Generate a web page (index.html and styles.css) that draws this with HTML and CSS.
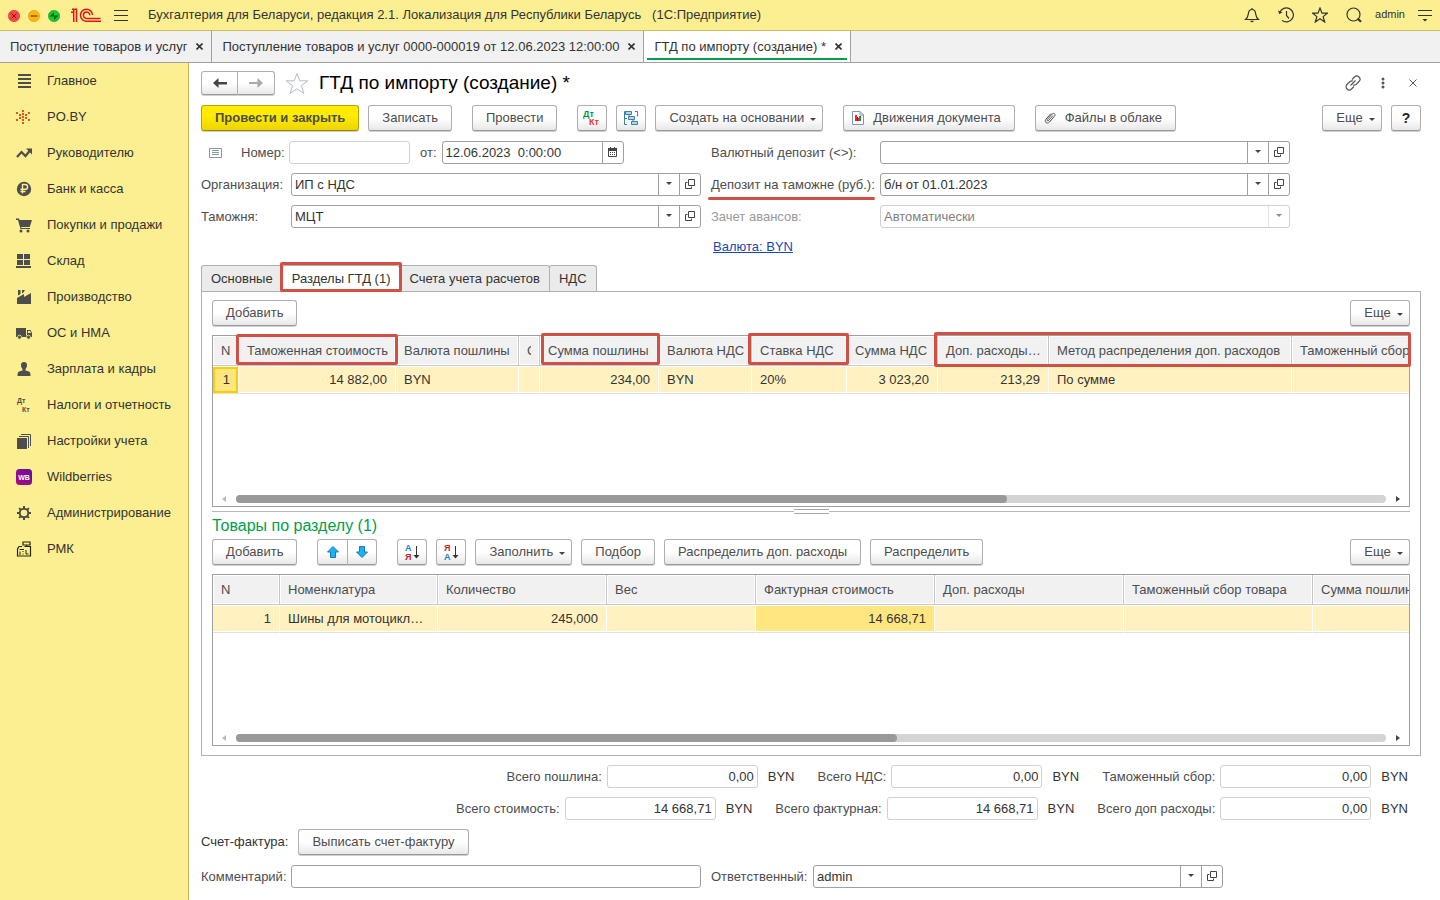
FILE: index.html
```html
<!DOCTYPE html>
<html lang="ru">
<head>
<meta charset="utf-8">
<title>ГТД по импорту (создание) *</title>
<link rel="stylesheet" href="styles.css">
</head>
<body>
<svg class="defs" aria-hidden="true">
  <symbol id="open" viewBox="0 0 10 10"><path d="M3.5.5h6v6h-6zM2.500 3.500h-2v6h6v-2" fill="none" stroke="#444"/></symbol>
  <symbol id="drop" viewBox="0 0 6 3"><path d="M0 0h6L3 3z" fill="#444"/></symbol>
</svg>

<header class="topbar">
  <div class="lights">
    <svg width="12" height="12" viewBox="0 0 12 12"><circle cx="6" cy="6" r="5.700" fill="#fb4646" stroke="#dd3030" stroke-width=".6"/><path d="M3.500 3.500l5 5M8.500 3.500l-5 5" stroke="#7c0d0d"/></svg>
    <svg width="12" height="12" viewBox="0 0 12 12"><circle cx="6" cy="6" r="5.700" fill="#fdb70d" stroke="#dd9a10" stroke-width=".6"/><path d="M2.500 6h7" stroke="#b06a00" stroke-width="2"/></svg>
    <svg width="12" height="12" viewBox="0 0 12 12"><circle cx="6" cy="6" r="5.700" fill="#16c832" stroke="#10a428" stroke-width=".6"/><path d="M1.500 6.500L6 2v4.500zM10.500 5.500L6 10V5.500z" fill="#056312"/></svg>
  </div>
  <svg class="logo" width="30" height="15" viewBox="0 0 30 15" fill="none" stroke="#e2131d" stroke-width="1.500"><path d="M0 4.200h2.700V14M1 1.200h4.500V14M2.700 4V1.500"/><path d="M21.500 7A6 6 0 1 0 15.500 13.200H30M18.800 7.200A3.200 3.200 0 1 0 15.600 10.400H29.500"/></svg>
  <button class="icon-btn burger" aria-label="Меню"><svg width="14" height="12" viewBox="0 0 14 12"><path d="M0 .5h14M0 5.500h14M0 10.500h14" stroke="#333"/></svg></button>
  <div class="app-title">Бухгалтерия для Беларуси, редакция 2.1. Локализация для Республики Беларусь &nbsp; (1С:Предприятие)</div>
  <div class="top-icons">
    <button class="icon-btn" aria-label="Уведомления"><svg width="16" height="16" viewBox="0 0 16 16" fill="none" stroke="#333" stroke-width="1.200"><path d="M8 1v1.500M1.500 12.500h13C12 10.500 12 9 11.500 6 11.200 3.500 10 2.500 8 2.500S4.800 3.500 4.500 6C4 9 4 10.500 1.500 12.500z"/><path d="M5.500 13.700h5L8 15.500z" fill="#333" stroke="none"/></svg></button>
    <button class="icon-btn" aria-label="История"><svg width="16" height="16" viewBox="0 0 16 16" fill="none" stroke="#333" stroke-width="1.200"><path d="M1.800 5.500A7 7 0 1 1 4 13.400"/><path d="M8.500 4v4.500l2.500 3"/><path d="M0 3.500l1.200 3.500 3.300-1.500z" fill="#333" stroke="none"/></svg></button>
    <button class="icon-btn" aria-label="Избранное"><svg width="16" height="16" viewBox="0 0 16 16" fill="none" stroke="#333" stroke-width="1.200"><path d="M8 1l2 5.200h5.300l-4.200 3.400 1.600 5.400L8 11.800 3.300 15l1.600-5.400L.7 6.200H6z"/></svg></button>
    <button class="icon-btn" aria-label="Поиск"><svg width="16" height="16" viewBox="0 0 16 16" fill="none" stroke="#333" stroke-width="1.200"><circle cx="7.500" cy="7.500" r="6.500"/><path d="M11.500 11.500l3.500 3.300" stroke-width="2.200"/></svg></button>
  </div>
  <span class="user">admin</span>
  <button class="icon-btn" aria-label="Настройки"><svg width="14" height="14" viewBox="0 0 14 14"><path d="M0 2.500h14M0 7.500h14" stroke="#333"/><path d="M4.500 11h5L7 13.500z" fill="#333"/></svg></button>
</header>

<nav class="windows" aria-label="Открытые окна">
  <div class="window-tab"><span>Поступление товаров и услуг</span><button class="icon-btn" aria-label="Закрыть"><svg width="7" height="7" viewBox="0 0 7 7"><path d="M.5.500l6 6M6.500.500l-6 6" stroke="#333" stroke-width="1.600"/></svg></button></div>
  <div class="window-tab"><span>Поступление товаров и услуг 0000-000019 от 12.06.2023 12:00:00</span><button class="icon-btn" aria-label="Закрыть"><svg width="7" height="7" viewBox="0 0 7 7"><path d="M.5.500l6 6M6.500.500l-6 6" stroke="#333" stroke-width="1.600"/></svg></button></div>
  <div class="window-tab current"><span>ГТД по импорту (создание) *</span><button class="icon-btn" aria-label="Закрыть"><svg width="7" height="7" viewBox="0 0 7 7"><path d="M.5.500l6 6M6.500.500l-6 6" stroke="#333" stroke-width="1.600"/></svg></button></div>
</nav>

<div class="workspace">
  <nav class="sidebar" aria-label="Разделы">
    <a href="#"><svg viewBox="0 0 16 16"><path d="M2 2h13M2 6h13M2 10h13M2 14h13" stroke="#4d4d4d" stroke-width="2"/></svg>Главное</a>
    <a href="#"><svg viewBox="0 0 16 16" fill="#e8501c"><path d="M6 1h2v2H6zM6 4h2v2H6zM6 7h2v2H6zM6 10h2v2H6zM6 13h2v2H6zM3 5h2v2H3zM3 8h2v2H3zM9 5h2v2H9zM9 8h2v2H9zM0 3h2v2H0zM0 10h2v2H0zM12 3h2v2h-2zM12 10h2v2h-2z"/></svg>PO.BY</a>
    <a href="#"><svg viewBox="0 0 16 16"><path d="M1 12l4.500-5 4 4 4.500-5.500" fill="none" stroke="#4d4d4d" stroke-width="2.200"/><path d="M10 3.500h6v6z" fill="#4d4d4d"/></svg>Руководителю</a>
    <a href="#"><svg viewBox="0 0 16 16"><circle cx="8" cy="8" r="7.200" fill="#4d4d4d"/><path d="M6.500 12.500v-9h2.700a2.300 2.300 0 0 1 0 4.800H4.500M4.500 10.500h5" fill="none" stroke="#fcef91" stroke-width="1.400"/></svg>Банк и касса</a>
    <a href="#"><svg viewBox="0 0 16 16"><path d="M0 1.500h3l.6 1.500H16l-2.300 7H5l.5 1H14v1H4.500L2 3H0z" fill="#4d4d4d"/><circle cx="5" cy="14" r="1.500" fill="#4d4d4d"/><circle cx="12" cy="14" r="1.500" fill="#4d4d4d"/></svg>Покупки и продажи</a>
    <a href="#"><svg viewBox="0 0 16 16"><path d="M1 1h6v5H1zM8 1h6v5H8zM1 7h6v5H1zM8 7h6v5H8zM0 13h15v2H0z" fill="#4d4d4d"/></svg>Склад</a>
    <a href="#"><svg viewBox="0 0 16 16"><path d="M1 15V9l7-4v3l7-4v11zM2 1h2.500v4L2 6.500zM6 1h3L7 4H6z" fill="#4d4d4d"/></svg>Производство</a>
    <a href="#"><svg viewBox="0 0 16 16"><path d="M0 3h10v9H0zM11 5h3.500L16 8v4h-5z" fill="#4d4d4d"/><path d="M12 6h2l1 2h-3z" fill="#fcef91"/><path d="M9 10.500h3v1.500H9z" fill="#4d4d4d"/><g fill="#4d4d4d" stroke="#fcef91" stroke-width=".8"><circle cx="3.500" cy="12.200" r="2"/><circle cx="12.500" cy="12.200" r="2"/></g></svg>ОС и НМА</a>
    <a href="#"><svg viewBox="0 0 16 16"><path d="M8 1c2.200 0 3.200 1.500 3 3.500-.2 1.800-1 3-1.500 3.500v1.500l3.500 1c1 .4 1.500 1.500 1.500 4.500h-13c0-3 .5-4.100 1.500-4.500l3.500-1V8C6 7.500 5.200 6.300 5 4.500 4.800 2.500 5.800 1 8 1z" fill="#4d4d4d"/></svg>Зарплата и кадры</a>
    <a href="#"><svg viewBox="0 0 16 16"><text class="mini-text" x="1" y="6">Дт</text><text class="mini-text" x="6" y="15">Кт</text></svg>Налоги и отчетность</a>
    <a href="#"><svg viewBox="0 0 16 16"><path d="M1 5h10v11H1z" fill="#4d4d4d"/><path d="M3 3.500h9.500V15M5 1.500h9.500V13" fill="none" stroke="#4d4d4d"/></svg>Настройки учета</a>
    <a href="#"><svg viewBox="0 0 16 16"><defs><linearGradient id="wb" x1="0" y1="1" x2="1" y2="0"><stop offset="0" stop-color="#b00a86"/><stop offset="1" stop-color="#5f0fa0"/></linearGradient></defs><rect width="16" height="16" rx="3.500" fill="url(#wb)"/><text class="wb-text" x="8" y="11">WB</text></svg>Wildberries</a>
    <a href="#"><svg viewBox="0 0 16 16" fill="none" stroke="#4d4d4d"><circle cx="8" cy="8" r="4.300" stroke-width="2"/><path d="M8 1v2.500M8 12.500V15M1 8h2.500M12.500 8H15M3.100 3.100l1.700 1.700M11.200 11.200l1.700 1.700M12.900 3.100l-1.700 1.700M4.800 11.200l-1.700 1.700" stroke-width="2"/></svg>Администрирование</a>
    <a href="#"><svg viewBox="0 0 16 16" fill="none" stroke="#26260f" stroke-width="1.200"><path d="M7 1h7v3H7zM10.500 4v2M6 5.500H3L1.500 8v7h13V5.500h-6"/><path d="M3.500 8.500H8M4 10.500V14M6.500 10.500h1M6.500 13h1M10 9v4h2.500" stroke-width="1"/></svg>РМК</a>
  </nav>

  <main class="document">
    <div class="title-row">
      <div class="split-btn">
        <button class="btn" aria-label="Назад"><svg width="14" height="10" viewBox="0 0 14 10"><path d="M5.500 0v4H14v2.500H5.500V10L0 5z" fill="#444"/></svg></button><button class="btn" aria-label="Вперед"><svg width="14" height="10" viewBox="0 0 14 10"><path d="M8.500 0v4H0v2h8.500v4L14 5z" fill="#aaa"/></svg></button>
      </div>
      <button class="icon-btn" aria-label="В избранное"><svg width="24" height="23" viewBox="0 0 24 23"><path d="M12 1.500l2.800 7.300h8l-6.400 4.900 2.500 7.800-6.900-4.700-6.900 4.700 2.500-7.800L1.200 8.800h8z" fill="#fff" stroke="#b4bcc6"/></svg></button>
      <h1>ГТД по импорту (создание) *</h1>
      <div class="title-tools">
        <button class="icon-btn" aria-label="Ссылка"><svg width="16" height="16" viewBox="0 0 16 16" fill="none" stroke="#555" stroke-width="1.200"><path d="M7 4.500L9.500 2a3 3 0 0 1 4.500 4.500L11 9.500q-1.500 1-3 .5M9 11.500L6.500 14A3 3 0 0 1 2 9.500L5 6.500q1.500-1 3-.5M10.500 5.500l-5 5"/></svg></button>
        <button class="icon-btn" aria-label="Еще"><svg width="4" height="12" viewBox="0 0 4 12" fill="#555"><circle cx="2" cy="2" r="1.500"/><circle cx="2" cy="6" r="1.500"/><circle cx="2" cy="10" r="1.500"/></svg></button>
        <button class="icon-btn" aria-label="Закрыть"><svg width="8" height="8" viewBox="0 0 8 8"><path d="M.5.500l7 7M7.500.500l-7 7" stroke="#555"/></svg></button>
      </div>
    </div>

    <div class="toolbar main-tools">
      <div class="group"><button class="btn primary">Провести и закрыть</button><button class="btn">Записать</button></div>
      <div class="group"><button class="btn">Провести</button></div>
      <div class="group">
        <button class="btn square" aria-label="Дт Кт"><svg width="18" height="18" viewBox="0 0 18 18"><text class="mini-text debit" x="0" y="8">Дт</text><text class="mini-text credit" x="6" y="16">Кт</text></svg></button>
        <button class="btn square" aria-label="Структура"><svg width="16" height="16" viewBox="0 0 16 16" fill="none" stroke="#3f7fac"><path d="M4 1.500H1.500v13H4M12 1.500h2.500v5M1.500 8.500H4"/><path d="M2.500 1.500h6v3h-6zM5.500 6.500h6v3h-6zM8.500 11.500h6v3h-6zM6 4.500v2M10 9.500v2" fill="#b5d6ea"/></svg></button>
        <button class="btn menu">Создать на основании<svg class="caret"><use href="#drop"/></svg></button>
      </div>
      <div class="group"><button class="btn with-icon"><svg width="14" height="16" viewBox="0 0 14 16"><path d="M1.500 1.500h7.500l3.500 3.500v9.500h-11z" fill="#fff" stroke="#7f96ab"/><path d="M9 1.500V5h3.500" fill="none" stroke="#7f96ab"/><path d="M4 5h2v6H4z" fill="#e22"/><path d="M6 7h1v4H6z" fill="#444"/><path d="M7 8h1v3H7z" fill="#e22"/><path d="M8 6h2v5H8z" fill="#1a9a3c"/></svg>Движения документа</button></div>
      <div class="group"><button class="btn with-icon"><svg width="14" height="16" viewBox="0 0 14 16"><path d="M10 5.500L5.500 10.500c-.8.900-2 0-1.200-1L9.200 4c1.600-1.600 3.800.3 2.400 2.100L6.500 12c-2.400 2.500-5.600 0-3.600-2.700L8 3.500" fill="none" stroke="#555"/></svg>Файлы в облаке</button></div>
      <div class="group end"><button class="btn menu">Еще<svg class="caret"><use href="#drop"/></svg></button><button class="btn square help">?</button></div>
    </div>

    <form class="fields">
      <div class="row">
        <svg class="doc-state" width="13" height="10" viewBox="0 0 13 10" fill="none" stroke="#8796a8"><path d="M.5.500h12v9H.5zM3 2.500h7M3 4.500h7M3 6.500h7"/></svg>
        <label class="num-label" for="num">Номер:</label>
        <span class="box muted num"><input id="num" type="text"></span>
        <label class="date-label" for="date">от:</label>
        <span class="box date"><input id="date" type="text" value="12.06.2023  0:00:00"><button type="button" aria-label="Календарь"><svg width="9" height="10" viewBox="0 0 9 10"><path d="M.5 2v7.500h8V2z" fill="#fff" stroke="#444"/><path d="M0 1h9v3H0zM2 0h1v2H2zM6 0h1v2H6z" fill="#444"/><path d="M2 5.500h5M2 7.500h5" stroke="#444" stroke-dasharray="1"/></svg></button></span>
      </div>
      <div class="row right">
        <label for="curdep">Валютный депозит (&lt;&gt;):</label>
        <span class="box"><input id="curdep" type="text"><button type="button" aria-label="Выбрать"><svg class="caret"><use href="#drop"/></svg></button><button type="button" aria-label="Открыть"><svg class="open"><use href="#open"/></svg></button></span>
      </div>
      <div class="row left">
        <label for="org">Организация:</label>
        <span class="box"><input id="org" type="text" value="ИП с НДС"><button type="button" aria-label="Выбрать"><svg class="caret"><use href="#drop"/></svg></button><button type="button" aria-label="Открыть"><svg class="open"><use href="#open"/></svg></button></span>
      </div>
      <div class="row right">
        <label class="marked" for="dep">Депозит на таможне (руб.):</label>
        <span class="box"><input id="dep" type="text" value="б/н от 01.01.2023"><button type="button" aria-label="Выбрать"><svg class="caret"><use href="#drop"/></svg></button><button type="button" aria-label="Открыть"><svg class="open"><use href="#open"/></svg></button></span>
      </div>
      <div class="row left">
        <label for="customs">Таможня:</label>
        <span class="box"><input id="customs" type="text" value="МЦТ"><button type="button" aria-label="Выбрать"><svg class="caret"><use href="#drop"/></svg></button><button type="button" aria-label="Открыть"><svg class="open"><use href="#open"/></svg></button></span>
      </div>
      <div class="row right disabled">
        <label for="adv">Зачет авансов:</label>
        <span class="box muted"><input id="adv" type="text" value="Автоматически" disabled><button type="button" aria-label="Выбрать" disabled><svg class="caret"><use href="#drop"/></svg></button></span>
      </div>
      <div class="row currency"><a href="#">Валюта: BYN</a></div>
    </form>

    <div class="tabs" role="tablist">
      <button role="tab">Основные</button><button role="tab" class="active" aria-selected="true">Разделы ГТД (1)<span class="mark"></span></button><button role="tab">Счета учета расчетов</button><button role="tab">НДС</button>
    </div>

    <section class="panel">
      <div class="toolbar"><button class="btn">Добавить</button><div class="group end"><button class="btn menu">Еще<svg class="caret"><use href="#drop"/></svg></button></div></div>
      <div class="grid">
        <div class="viewport">
          <table>
            <colgroup><col class="w26"><col class="w157"><col class="w123"><col class="w21"><col class="w119"><col class="w93"><col class="w95"><col class="w91"><col class="w111"><col class="w243"><col></colgroup>
            <thead><tr><th>N</th><th>Таможенная стоимость</th><th>Валюта пошлины</th><th><span class="clip">С</span></th><th>Сумма пошлины</th><th>Валюта НДС</th><th>Ставка НДС</th><th>Сумма НДС</th><th>Доп. расходы…</th><th>Метод распределения доп. расходов</th><th>Таможенный сбор</th></tr></thead>
            <tbody><tr><td class="number focus">1</td><td class="number">14 882,00</td><td>BYN</td><td></td><td class="number">234,00</td><td>BYN</td><td>20%</td><td class="number">3 023,20</td><td class="number">213,29</td><td>По сумме</td><td></td></tr></tbody>
          </table>
        </div>
        <div class="scroll"><svg width="4" height="6" viewBox="0 0 4 6"><path d="M4 0v6L0 3z" fill="#bbb"/></svg><div class="track"><div class="thumb sections"></div></div><svg width="4" height="6" viewBox="0 0 4 6"><path d="M0 0v6l4-3z" fill="#444"/></svg></div>
        <span class="mark m-cost"></span><span class="mark m-duty"></span><span class="mark m-rate"></span><span class="mark m-extra"></span>
      </div>
      <div class="splitter"><span></span></div>
      <h2>Товары по разделу (1)</h2>
      <div class="toolbar">
        <div class="group"><button class="btn">Добавить</button></div>
        <div class="split-btn">
          <button class="btn" aria-label="Вверх"><svg width="12" height="12" viewBox="0 0 12 12"><path d="M6 .5L11.500 6H8.500v5.500h-5V6H.5z" fill="#1eb0f5" stroke="#157cb4"/></svg></button><button class="btn" aria-label="Вниз"><svg width="12" height="12" viewBox="0 0 12 12"><path d="M6 11.500L.5 6h3V.5h5V6h3z" fill="#1eb0f5" stroke="#157cb4"/></svg></button>
        </div>
        <div class="group">
          <button class="btn square" aria-label="По возрастанию"><svg width="16" height="18" viewBox="0 0 16 18"><text class="sort-text blue" x="1" y="8">А</text><text class="sort-text red" x="1" y="17">Я</text><path d="M12.500 3v10" stroke="#333"/><path d="M9.500 12h6l-3 3.500z" fill="#333"/></svg></button>
          <button class="btn square" aria-label="По убыванию"><svg width="16" height="18" viewBox="0 0 16 18"><text class="sort-text red" x="1" y="8">Я</text><text class="sort-text blue" x="1" y="17">А</text><path d="M12.500 3v10" stroke="#333"/><path d="M9.500 12h6l-3 3.500z" fill="#333"/></svg></button>
          <button class="btn menu">Заполнить<svg class="caret"><use href="#drop"/></svg></button>
          <button class="btn">Подбор</button>
          <button class="btn">Распределить доп. расходы</button>
          <button class="btn">Распределить</button>
        </div>
        <div class="group end"><button class="btn menu">Еще<svg class="caret"><use href="#drop"/></svg></button></div>
      </div>
      <div class="grid">
        <div class="viewport">
          <table>
            <colgroup><col class="w67"><col class="w158"><col class="w169"><col class="w149"><col class="w179"><col class="w189"><col class="w189"><col></colgroup>
            <thead><tr><th>N</th><th>Номенклатура</th><th>Количество</th><th>Вес</th><th>Фактурная стоимость</th><th>Доп. расходы</th><th>Таможенный сбор товара</th><th>Сумма пошлины</th></tr></thead>
            <tbody><tr><td class="number">1</td><td>Шины для мотоцикл…</td><td class="number">245,000</td><td></td><td class="number current">14 668,71</td><td></td><td></td><td></td></tr></tbody>
          </table>
        </div>
        <div class="scroll"><svg width="4" height="6" viewBox="0 0 4 6"><path d="M4 0v6L0 3z" fill="#bbb"/></svg><div class="track"><div class="thumb goods"></div></div><svg width="4" height="6" viewBox="0 0 4 6"><path d="M0 0v6l4-3z" fill="#444"/></svg></div>
      </div>
    </section>

    <div class="totals">
      <div class="total"><label for="t1">Всего пошлина:</label><span class="box muted"><input id="t1" type="text" value="0,00" readonly></span><span class="unit">BYN</span></div>
      <div class="total"><label for="t2">Всего НДС:</label><span class="box muted"><input id="t2" type="text" value="0,00" readonly></span><span class="unit">BYN</span></div>
      <div class="total"><label for="t3">Таможенный сбор:</label><span class="box muted"><input id="t3" type="text" value="0,00" readonly></span><span class="unit">BYN</span></div>
    </div>
    <div class="totals">
      <div class="total"><label for="t4">Всего стоимость:</label><span class="box muted"><input id="t4" type="text" value="14 668,71" readonly></span><span class="unit">BYN</span></div>
      <div class="total"><label for="t5">Всего фактурная:</label><span class="box muted"><input id="t5" type="text" value="14 668,71" readonly></span><span class="unit">BYN</span></div>
      <div class="total"><label for="t6">Всего доп расходы:</label><span class="box muted"><input id="t6" type="text" value="0,00" readonly></span><span class="unit">BYN</span></div>
    </div>
    <div class="invoice"><span>Счет-фактура:</span><button class="btn">Выписать счет-фактуру</button></div>
    <div class="footer-fields">
      <div class="row left"><label for="comment">Комментарий:</label><span class="box"><input id="comment" type="text"></span></div>
      <div class="row responsible"><label for="resp">Ответственный:</label><span class="box"><input id="resp" type="text" value="admin"><button type="button" aria-label="Выбрать"><svg class="caret"><use href="#drop"/></svg></button><button type="button" aria-label="Открыть"><svg class="open"><use href="#open"/></svg></button></span></div>
    </div>
  </main>
</div>
</body>
</html>
```
FILE: styles.css
```css
* { box-sizing: border-box; }
body {
  margin: 0;
  min-height: 100vh;
  display: flex;
  flex-direction: column;
  font: 13px/16px "Liberation Sans", Arial, sans-serif;
  color: #333;
  background: #fff;
}
button, input { font: inherit; color: inherit; }
button { padding: 0; white-space: nowrap; }
label { white-space: nowrap; color: #4d4d4d; }
.defs { position: absolute; width: 0; height: 0; }
.icon-btn { display: flex; border: 0; background: none; }

/* application header */
.topbar {
  display: flex;
  align-items: center;
  height: 31px;
  padding: 0 8px;
  background: #fcef91;
  border-bottom: 1px solid #c9bd66;
}
.lights { display: flex; gap: 8px; padding-top: 1px; }
.logo { margin-left: 11px; }
.burger { margin-left: 13px; padding-top: 1px; }
.app-title { margin-left: 20px; white-space: nowrap; }
.top-icons { display: flex; gap: 18px; margin-left: auto; }
.user { margin: 0 13px 2px 13px; font-size: 11px; }

/* open windows */
.windows {
  display: flex;
  height: 32px;
  background: #f1f1f1;
  border-bottom: 1px solid #a0a0a0;
}
.window-tab {
  display: flex;
  align-items: center;
  gap: 9px;
  padding: 0 8px 0 10px;
  border-right: 1px solid #a0a0a0;
  white-space: nowrap;
}
.window-tab.current {
  position: relative;
  background: #fff;
}
.window-tab.current::after {
  content: "";
  position: absolute;
  left: 3px;
  right: 3px;
  bottom: 2px;
  height: 2px;
  background: #00a04a;
}

/* sections */
.workspace { flex: 1; display: flex; }
.sidebar {
  flex: none;
  width: 189px;
  background: #fcef91;
  border-right: 1px solid #c0b45c;
}
.sidebar a {
  display: flex;
  align-items: center;
  gap: 15px;
  height: 36px;
  padding-left: 16px;
  color: #333;
  text-decoration: none;
}
.sidebar svg { width: 16px; height: 16px; }
.mini-text { font: bold 7px "Liberation Sans", Arial, sans-serif; fill: #4d4d4d; }
.mini-text.debit { font-size: 9px; fill: #009646; }
.mini-text.credit { font-size: 9px; fill: #e8303a; }
.wb-text { font: bold 7px "Liberation Sans", Arial, sans-serif; fill: #fff; text-anchor: middle; }
.sort-text { font: bold 9px "Liberation Sans", Arial, sans-serif; }
.blue { fill: #1b80c8; }
.red { fill: #cc1f2d; }

/* document form */
.document {
  flex: 1;
  min-width: 0;
  display: flex;
  flex-direction: column;
  padding: 8px 19px 12px 12px;
}
.title-row { display: flex; align-items: center; gap: 10px; height: 24px; }
h1 { margin: 0; font-size: 19px; line-height: 24px; font-weight: normal; color: #000; }
.title-tools { display: flex; align-items: center; gap: 14px; margin-left: auto; }
.title-tools .icon-btn { width: 16px; justify-content: center; }

.btn {
  display: inline-flex;
  align-items: center;
  justify-content: center;
  height: 26px;
  padding: 0 13px;
  border: 1px solid #b0b0b0;
  border-bottom-color: #999;
  border-radius: 3px;
  background: linear-gradient(#fff 50%, #e8e8e8);
  box-shadow: 0 1px 0 #d0d0d0;
  color: #4d4d4d;
}
.btn.primary {
  font-weight: bold;
  background: linear-gradient(#ffec00 40%, #ecd500);
  border-color: #b8a400;
  border-bottom-color: #998800;
}
.btn.square { width: 30px; padding: 0; }
.btn.menu { gap: 6px; min-width: 60px; padding-right: 6px; }
.btn.menu .caret { margin-top: 3px; }
.btn.with-icon { gap: 8px; padding-left: 7px; }
.btn.help { font-size: 14px; font-weight: bold; color: #222; }
.caret { width: 6px; height: 3px; }
.open { width: 10px; height: 10px; }

.split-btn { display: flex; }
.split-btn .btn:first-child { width: 31px; padding: 0; border-radius: 3px 0 0 3px; }
.split-btn .btn:last-child { width: 29px; padding: 0; border-radius: 0 3px 3px 0; border-left: 0; }
.title-row .split-btn .btn { width: 37px; height: 24px; }

.toolbar { display: flex; gap: 20px; }
.group { display: flex; gap: 9px; }
.group.end { margin-left: auto; }
.main-tools { margin: 10px 0; }

.fields {
  display: grid;
  grid-template-columns: 500fr 579fr;
  gap: 9px 10px;
  margin-bottom: 5px;
  padding-right: 131px;
}
.row { display: flex; align-items: center; height: 23px; min-width: 0; }
.row.left label { width: 90px; }
.row.right label { width: 169px; }
.row.responsible label { width: 102px; }
.row.disabled label { color: #999; }
.row.disabled input { color: #808080; }
.row.currency { grid-column: 2; padding: 0 0 4px 2px; }
.currency a { color: #1848b8; }
.doc-state { margin: 0 19px 0 8px; }
.num-label { width: 48px; }
.date-label { margin: 0 5px 0 10px; }
.marked { position: relative; }
.marked::after {
  content: "";
  position: absolute;
  left: -3px;
  right: 5px;
  bottom: -7px;
  height: 3px;
  border-radius: 2px;
  background: #d14f43;
}

.box {
  flex: 1;
  min-width: 0;
  display: flex;
  height: 23px;
  border: 1px solid #a0a0a0;
  border-radius: 3px;
  background: #fff;
}
.box.muted { border-color: #d0d0d0; }
.box.num { flex: 0 0 121px; }
.box.date { flex: 0 0 182px; }
.box input {
  flex: 1;
  min-width: 0;
  padding: 0 3px;
  border: 0;
  background: none;
  outline: 0;
}
.box button {
  display: flex;
  align-items: center;
  justify-content: center;
  width: 21px;
  padding-bottom: 2px;
  border: 0;
  border-left: 1px solid #a0a0a0;
  background: none;
}
.box.muted button { border-color: #d0d0d0; opacity: .6; }

/* tabs */
.tabs { display: flex; }
.tabs button {
  position: relative;
  height: 26px;
  padding: 0 9px;
  border: 1px solid #b0b0b0;
  border-bottom: 0;
  border-radius: 3px 3px 0 0;
  background: #ebebeb;
  color: #333;
}
.tabs button + button { margin-left: -1px; }
.tabs .active { z-index: 1; background: #fff; }
.mark {
  position: absolute;
  border: 3px solid #d14f43;
  border-radius: 2px;
  pointer-events: none;
}
.tabs .mark { inset: -4px -3px -1px -3px; }

.panel {
  flex: 1;
  display: flex;
  flex-direction: column;
  margin-bottom: 9px;
  padding: 8px 10px 9px;
  border: 1px solid #b0b0b0;
}
.grid {
  position: relative;
  flex: 1;
  min-height: 120px;
  display: flex;
  flex-direction: column;
  margin-top: 9px;
  border: 1px solid #a0a0a0;
}
.viewport { flex: 1; overflow: hidden; }
table { width: 100%; table-layout: fixed; border-collapse: separate; border-spacing: 0; }
th, td {
  overflow: hidden;
  padding: 0 8px;
  text-align: left;
  font-weight: normal;
  white-space: nowrap;
}
th {
  height: 30px;
  background: #f1f1f1;
  color: #4d4d4d;
  border-right: 1px solid #c8c8c8;
  border-bottom: 1px solid #c8c8c8;
  box-shadow: inset 0 0 0 1px #fff;
}
td {
  height: 28px;
  background: #fff2c0;
  border: solid #fff;
  border-width: 1px 1px 1px 0;
  border-bottom-color: #e0e0e0;
  box-shadow: inset 0 -1px 0 #fff;
}
th:last-child, td:last-child { padding-right: 0; border-right: 0; }
.number { text-align: right; }
.focus { background: #ffe680; box-shadow: inset 0 0 0 2px #fc0; }
.current.number { background: #ffe680; }
.clip { display: block; overflow: hidden; }
.w21 { width: 21px; }
.w26 { width: 26px; }
.w67 { width: 67px; }
.w91 { width: 91px; }
.w93 { width: 93px; }
.w95 { width: 95px; }
.w111 { width: 111px; }
.w119 { width: 119px; }
.w123 { width: 123px; }
.w149 { width: 149px; }
.w157 { width: 157px; }
.w158 { width: 158px; }
.w169 { width: 169px; }
.w179 { width: 179px; }
.w189 { width: 189px; }
.w243 { width: 243px; }
.m-cost { left: 23px; top: -2px; width: 162px; height: 31px; }
.m-duty { left: 328px; top: -3px; width: 119px; height: 32px; }
.m-rate { left: 535px; top: -3px; width: 101px; height: 32px; }
.m-extra { left: 721px; right: -2px; top: -4px; height: 35px; }

.scroll { display: flex; align-items: center; gap: 10px; padding: 0 9px 3px; }
.track { flex: 1; height: 8px; border-radius: 4px; background: #d4d4d4; }
.thumb { height: 8px; border-radius: 4px; background: #999; }
.thumb.sections { width: 67%; }
.thumb.goods { width: 57.5%; }
.splitter { display: flex; justify-content: center; margin-top: 4px; height: 1px; background: #b8b8b8; }
.splitter span {
  flex: none;
  width: 35px;
  height: 5px;
  margin-top: -2px;
  border: solid #a8a8a8;
  border-width: 1px 0;
  background: #fff;
}
h2 { margin: 0; font-size: 16px; line-height: 27px; font-weight: normal; color: #00a04a; }

.totals { display: flex; justify-content: flex-end; gap: 23px; padding-right: 13px; margin-bottom: 9px; }
.total { display: flex; align-items: center; }
.total .box { flex: none; width: 151px; margin: 0 10px 0 5px; }
.total input { text-align: right; }
.invoice { display: flex; align-items: center; gap: 10px; margin-bottom: 10px; }
.footer-fields {
  display: grid;
  grid-template-columns: 500fr 512fr;
  gap: 10px;
  padding-right: 198px;
}
```
